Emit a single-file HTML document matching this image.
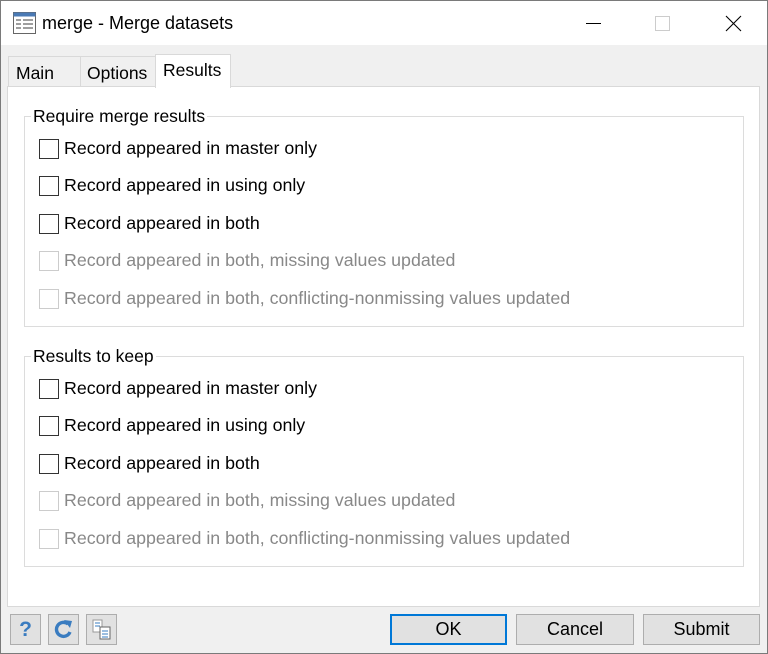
<!DOCTYPE html>
<html><head><style>
*{box-sizing:border-box;margin:0;padding:0}
body{width:768px;height:654px;position:relative;background:#f0f0f0;font-family:"Liberation Sans",sans-serif;overflow:hidden}
.win{position:absolute;left:0;top:0;width:768px;height:654px;border:1px solid #7a7a7a;background:#f0f0f0}
.title{position:absolute;left:0;top:0;width:766px;height:44px;background:#fff}
.abs{position:absolute}
.t{font-size:18px;color:#000;white-space:nowrap}
.tab{position:absolute;border:1px solid #d9d9d9;border-bottom:none;background:#f0f0f0;font-size:17.5px;padding:6px 0 0 6px}
.panel{position:absolute;left:6px;top:85px;width:753px;height:521px;background:#fff;border:1px solid #d9d9d9}
.grp{position:absolute;border:1px solid #dcdcdc}
.lg{position:absolute;background:#fff;font-size:17.5px;padding:0 2px}
.cb{position:absolute;width:20px;height:20px;border:1px solid #333;background:#fff}
.cb.d{border-color:#ccc}
.lab{position:absolute;font-size:17.8px;white-space:nowrap}
.lab.d{color:#888}
.btn{position:absolute;top:613px;height:31px;background:#e1e1e1;border:1px solid #adadad;font-size:18px;text-align:center;line-height:29px}
.sb{position:absolute;top:613px;width:31px;height:31px;background:#e1e1e1;border:1px solid #adadad}
</style></head><body>
<div class="win">
<div class="title"></div>
<svg class="abs" style="left:12px;top:11px" width="23" height="22" viewBox="0 0 23 22">
<rect x="0.5" y="0.5" width="22" height="21" fill="#fff" stroke="#666"/>
<rect x="0.5" y="0.5" width="22" height="4" fill="#4a7ab5"/>
<path d="M3 8h5M10 8h10M3 12h5M10 12h10M3 16h5M10 16h10" stroke="#666" stroke-width="1.2"/>
</svg>
<div class="abs t" style="left:41px;top:12px">merge - Merge datasets</div>
<div class="abs" style="left:585px;top:22px;width:15px;height:1px;background:#000"></div>
<div class="abs" style="left:654px;top:15px;width:15px;height:15px;border:1px solid #ccc"></div>
<svg class="abs" style="left:724px;top:14px" width="17" height="17"><path d="M1 1L16 16M16 1L1 16" stroke="#000" stroke-width="1.1"/></svg>

<div class="tab" style="left:7px;top:55px;width:73px;height:31px;padding-left:7px">Main</div>
<div class="tab" style="left:79px;top:55px;width:77px;height:31px">Options</div>
<div class="panel"></div>
<div class="tab" style="left:154px;top:53px;width:76px;height:34px;background:#fff;padding-top:5px;padding-left:7px;z-index:2">Results</div>

<div class="grp" style="left:23px;top:115px;width:720px;height:211px"></div>
<div class="lg" style="left:30px;top:105px">Require merge results</div>
<div class="grp" style="left:23px;top:355px;width:720px;height:211px"></div>
<div class="lg" style="left:30px;top:345px">Results to keep</div>

<div class="cb" style="left:38px;top:138px"></div><div class="lab" style="left:63px;top:137px">Record appeared in master only</div>
<div class="cb" style="left:38px;top:175px"></div><div class="lab" style="left:63px;top:174px">Record appeared in using only</div>
<div class="cb" style="left:38px;top:213px"></div><div class="lab" style="left:63px;top:212px">Record appeared in both</div>
<div class="cb d" style="left:38px;top:250px"></div><div class="lab d" style="left:63px;top:249px">Record appeared in both, missing values updated</div>
<div class="cb d" style="left:38px;top:288px"></div><div class="lab d" style="left:63px;top:287px">Record appeared in both, conflicting-nonmissing values updated</div>

<div class="cb" style="left:38px;top:378px"></div><div class="lab" style="left:63px;top:377px">Record appeared in master only</div>
<div class="cb" style="left:38px;top:415px"></div><div class="lab" style="left:63px;top:414px">Record appeared in using only</div>
<div class="cb" style="left:38px;top:453px"></div><div class="lab" style="left:63px;top:452px">Record appeared in both</div>
<div class="cb d" style="left:38px;top:490px"></div><div class="lab d" style="left:63px;top:489px">Record appeared in both, missing values updated</div>
<div class="cb d" style="left:38px;top:528px"></div><div class="lab d" style="left:63px;top:527px">Record appeared in both, conflicting-nonmissing values updated</div>

<div class="sb" style="left:9px"><div style="color:#3a7cc0;font-size:21px;font-weight:bold;text-align:center;line-height:29px">?</div></div>
<div class="sb" style="left:47px"><svg width="29" height="29"><path d="M19 9A7 7 0 1 0 21 17" fill="none" stroke="#3a7cc0" stroke-width="3.4"/><path d="M15 5L23 6L21 13Z" fill="#3a7cc0"/></svg></div>
<div class="sb" style="left:85px"><svg width="29" height="29"><rect x="6" y="5" width="9" height="12" fill="#fff" stroke="#999"/><path d="M8 8h5M8 11h5" stroke="#3a7cc0"/><rect x="13" y="12" width="10" height="12" fill="#fff" stroke="#666"/><path d="M15 16h6M15 19h6M15 22h6" stroke="#3a7cc0"/></svg></div>

<div class="btn" style="left:389px;width:117px;border:2px solid #0078d7;line-height:27px">OK</div>
<div class="btn" style="left:515px;width:118px">Cancel</div>
<div class="btn" style="left:642px;width:117px">Submit</div>
</div>
</body></html>
